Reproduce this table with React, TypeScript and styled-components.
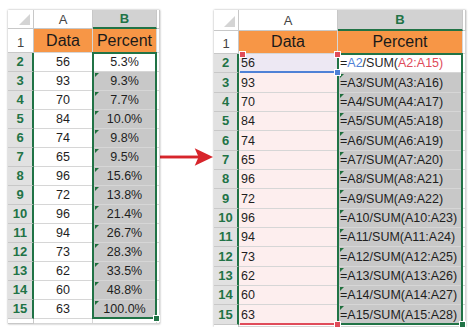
import React from 'react';
import styled, { createGlobalStyle } from 'styled-components';

const GREEN = '#217346';
const GRID = '#d6d6d6';

const GlobalStyle = createGlobalStyle`
  body {
    margin: 0;
    background: #fff;
    font-family: 'Liberation Sans', Arial, sans-serif;
  }
`;

type SheetCfg = {
  rowHead: number;
  colA: number;
  colB: number;
  tail: number;
  headH: number;
  row1H: number;
  rowH: number;
  tailH: number;
  size: number;
  align: 'left' | 'center';
};

const Page = styled.div`
  display: flex;
  align-items: flex-start;
  padding: 10px 0 0 8px;
`;

const Grid = styled.div<{ $cfg: SheetCfg }>`
  position: relative;
  display: grid;
  grid-template-columns: ${(p) => `${p.$cfg.rowHead}px ${p.$cfg.colA}px ${p.$cfg.colB}px ${p.$cfg.tail}px`};
  grid-template-rows: ${(p) =>
    `${p.$cfg.headH}px ${p.$cfg.row1H}px repeat(14, ${p.$cfg.rowH}px) ${p.$cfg.tailH}px`};
  background: #fff;
  box-shadow: 0 0 2px rgba(0, 0, 0, 0.35);
`;

const Corner = styled.div`
  position: relative;
  box-sizing: border-box;
  border-right: 1px solid #c8c8c8;
  border-bottom: 1px solid #c8c8c8;
  &::after {
    content: '';
    position: absolute;
    right: 3px;
    bottom: 3px;
    border-bottom: 11px solid #d4d4d4;
    border-left: 11px solid transparent;
  }
`;

const ColHead = styled.div<{ $sel?: boolean }>`
  box-sizing: border-box;
  display: flex;
  align-items: center;
  justify-content: center;
  font-size: 13px;
  font-weight: ${(p) => (p.$sel ? 700 : 400)};
  color: ${(p) => (p.$sel ? GREEN : '#444')};
  background: ${(p) => (p.$sel ? '#d2d2d2' : '#fff')};
  border-right: 1px solid #c8c8c8;
  border-bottom: ${(p) => (p.$sel ? `2px solid ${GREEN}` : '1px solid #c8c8c8')};
`;

const RowHead = styled.div<{ $sel?: boolean }>`
  box-sizing: border-box;
  display: flex;
  align-items: flex-end;
  justify-content: center;
  padding-bottom: 2px;
  font-size: 13px;
  font-weight: ${(p) => (p.$sel ? 700 : 400)};
  color: ${(p) => (p.$sel ? GREEN : '#444')};
  background: ${(p) => (p.$sel ? '#e1e1e1' : '#fff')};
  border-right: ${(p) => (p.$sel ? `2px solid ${GREEN}` : '1px solid #c8c8c8')};
  border-bottom: 1px solid #c8c8c8;
`;

const Cell = styled.div<{ $bg?: string; $left?: boolean; $size: number; $flag?: boolean }>`
  position: relative;
  box-sizing: border-box;
  display: flex;
  align-items: center;
  justify-content: ${(p) => (p.$left ? 'flex-start' : 'center')};
  padding-left: ${(p) => (p.$left ? 2 : 0)}px;
  background: ${(p) => p.$bg ?? '#fff'};
  border-right: 1px solid ${GRID};
  border-bottom: 1px solid ${GRID};
  font-size: ${(p) => p.$size}px;
  color: #1e1e1e;
  white-space: nowrap;
  overflow: hidden;
  &::before {
    content: '';
    display: ${(p) => (p.$flag ? 'block' : 'none')};
    position: absolute;
    top: 1px;
    left: 2px;
    border-top: 4px solid #1f6f3d;
    border-right: 4px solid transparent;
  }
`;

const Title = styled(Cell)`
  font-size: 16px;
  color: #1a1a1a;
  justify-content: center;
  padding-left: 0;
`;

const Selection = styled.div<{ $top: number; $left: number; $w: number; $h: number }>`
  position: absolute;
  top: ${(p) => p.$top}px;
  left: ${(p) => p.$left}px;
  width: ${(p) => p.$w}px;
  height: ${(p) => p.$h}px;
  box-sizing: border-box;
  border: 2px solid ${GREEN};
  pointer-events: none;
`;

const Handle = styled.div<{ $color: string; $top: number; $left: number }>`
  position: absolute;
  top: ${(p) => p.$top}px;
  left: ${(p) => p.$left}px;
  width: 5px;
  height: 5px;
  background: ${(p) => p.$color};
  border: 1px solid #fff;
`;

const RefLine = styled.div<{ $color: string; $top: number; $left: number; $w: number }>`
  position: absolute;
  top: ${(p) => p.$top}px;
  left: ${(p) => p.$left}px;
  width: ${(p) => p.$w}px;
  height: 2px;
  background: ${(p) => p.$color};
`;

const ArrowBox = styled.div`
  width: 54px;
  margin-top: 137px;
  display: flex;
`;

const Blue = styled.span`
  color: #4f81d6;
`;

const Red = styled.span`
  color: #e04c5a;
`;

const data = [56, 93, 70, 84, 74, 65, 96, 72, 96, 94, 73, 62, 60, 63];
const pct = ['5.3%', '9.3%', '7.7%', '10.0%', '9.8%', '9.5%', '15.6%', '13.8%', '21.4%', '26.7%', '28.3%', '33.5%', '48.8%', '100.0%'];

const leftCfg: SheetCfg = {
  rowHead: 26, colA: 59, colB: 64, tail: 3,
  headH: 19, row1H: 24, rowH: 19, tailH: 5,
  size: 12.5, align: 'center',
};

const rightCfg: SheetCfg = {
  rowHead: 25, colA: 99, colB: 125, tail: 3,
  headH: 21, row1H: 23, rowH: 19.35, tailH: 2,
  size: 12.5, align: 'left',
};

const SEL_FILL = '#c8c8c8';

type SheetProps = {
  cfg: SheetCfg;
  cellA: (i: number) => React.ReactNode;
  cellB: (i: number) => React.ReactNode;
  fillA?: (i: number) => string;
  extras?: React.ReactNode;
};

const Sheet = ({ cfg, cellA, cellB, fillA, extras }: SheetProps) => {
  const left = cfg.align === 'left';
  const top = cfg.headH + cfg.row1H;
  return (
    <Grid $cfg={cfg}>
      <Corner />
      <ColHead>A</ColHead>
      <ColHead $sel>B</ColHead>
      <ColHead />

      <RowHead>1</RowHead>
      <Title $bg="#f79646" $size={16}>Data</Title>
      <Title $bg="#f79646" $size={16}>Percent</Title>
      <Cell $size={cfg.size} />

      {data.map((_, i) => (
        <React.Fragment key={i}>
          <RowHead $sel>{i + 2}</RowHead>
          <Cell $size={cfg.size} $left={left} $bg={fillA ? fillA(i) : '#fff'}>
            {cellA(i)}
          </Cell>
          <Cell $size={cfg.size} $left={left} $bg={i === 0 ? '#fff' : SEL_FILL} $flag={i > 0}>
            {cellB(i)}
          </Cell>
          <Cell $size={cfg.size} />
        </React.Fragment>
      ))}

      <RowHead />
      <Cell $size={cfg.size} />
      <Cell $size={cfg.size} />
      <Cell $size={cfg.size} />

      <Selection
        $top={top - 1}
        $left={cfg.rowHead + cfg.colA - 1}
        $w={cfg.colB + 1}
        $h={cfg.rowH * 14 + 1}
      />
      <Handle $color={GREEN} $top={top + cfg.rowH * 14 - 4} $left={cfg.rowHead + cfg.colA + cfg.colB - 4} />
      {extras}
    </Grid>
  );
};

const Arrow = () => (
  <ArrowBox>
    <svg width="56" height="20" viewBox="0 0 56 20">
      <rect x="0" y="8.5" width="42" height="3" fill="#d7252b" />
      <path d="M36 1 L55 10 L36 19 L40 10 Z" fill="#d7252b" />
    </svg>
  </ArrowBox>
);

export default function App() {
  const r = rightCfg;
  const top = r.headH + r.row1H;
  const aLeft = r.rowHead;
  const bLeft = r.rowHead + r.colA;
  const bottom = top + r.rowH * 14;

  const rightExtras = (
    <>
      <RefLine $color="#4f81d6" $top={top + r.rowH - 2} $left={aLeft + 1} $w={r.colA - 1} />
      <RefLine $color="#e04c5a" $top={bottom - 2} $left={aLeft + 1} $w={r.colA - 1} />
      <Handle $color="#e04c5a" $top={top - 3} $left={bLeft - 4} />
      <Handle $color="#4f81d6" $top={top + r.rowH - 4} $left={bLeft - 4} />
      <Handle $color="#e04c5a" $top={bottom - 4} $left={bLeft - 4} />
      <Handle $color="#e04c5a" $top={top - 3} $left={aLeft} />
    </>
  );

  return (
    <>
      <GlobalStyle />
      <Page>
        <Sheet cfg={leftCfg} cellA={(i) => data[i]} cellB={(i) => pct[i]} />
        <Arrow />
        <Sheet
          cfg={rightCfg}
          cellA={(i) => data[i]}
          fillA={(i) => (i === 0 ? '#ede8f3' : '#fdeeee')}
          cellB={(i) =>
            i === 0 ? (
              <>
                =<Blue>A2</Blue>/SUM(<Red>A2:A15)</Red>
              </>
            ) : (
              `=A${i + 2}/SUM(A${i + 2}:A${i + 15})`
            )
          }
          extras={rightExtras}
        />
      </Page>
    </>
  );
}
